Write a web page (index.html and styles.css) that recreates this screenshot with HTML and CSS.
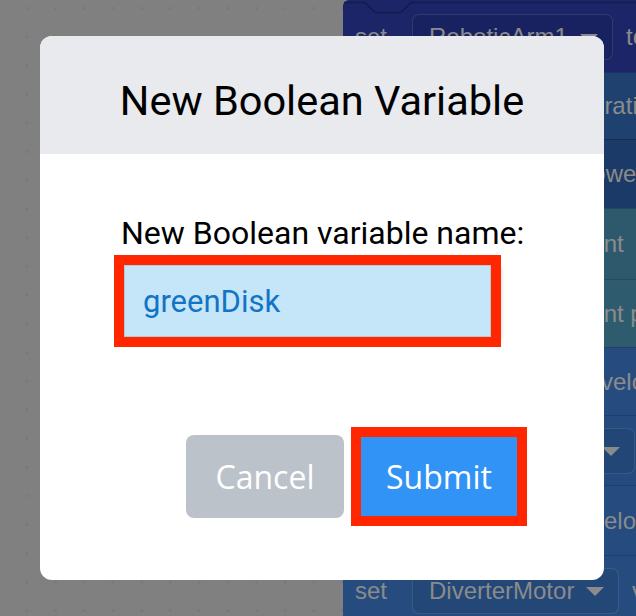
FILE: index.html
```html
<!DOCTYPE html>
<html lang="en">
<head>
  <meta charset="UTF-8">
  <title>New Boolean Variable</title>
  <link rel="stylesheet" href="styles.css">
</head>
<body>

<div class="workspace">
  <div class="stack">
    <div class="row r1">
      <svg class="notch" width="300" height="16" viewBox="0 0 300 16">
        <path d="M0 2.5 H20 C27 2.5 27 12.5 34 12.5 H56 C63 12.5 63 2.5 70 2.5 H300" fill="none" stroke="#131b4f" stroke-width="1.5"/>
      </svg>
      <span class="lbl">set</span>
      <span class="drop">RoboticArm1 <i class="caret"></i></span>
      <span class="lbl">to</span>
    </div>
    <div class="row r2"><span class="lbl">acceleration</span></div>
    <div class="row r3"><span class="lbl">power</span></div>
    <div class="row r4"><span class="lbl">current</span><span class="field"></span></div>
    <div class="row r5"><span class="lbl">current position</span></div>
    <div class="row r6"><span class="lbl">velocity</span></div>
    <div class="row r7"><span class="drop">motor <i class="caret"></i></span></div>
    <div class="row r8"><span class="lbl">velocity</span></div>
    <div class="row r9">
      <span class="lbl">set</span>
      <span class="drop">DiverterMotor <i class="caret"></i></span>
      <span class="lbl">velocity</span>
    </div>
  </div>

  <div class="dialog">
    <div class="dialog-head">New Boolean Variable</div>
    <div class="dialog-body">
      <label class="prompt" for="varName">New Boolean variable name:</label>
      <input type="text" id="varName" class="name-input" value="greenDisk">
      <div class="actions">
        <button class="btn btn-cancel">Cancel</button>
        <button class="btn btn-submit">Submit</button>
      </div>
    </div>
  </div>
</div>

</body>
</html>
```

FILE: styles.css
```css
body {
  margin: 0;
  padding: 0;
  font-family: Roboto, "Noto Sans", sans-serif;
}
.workspace {
  position: relative;
  width: 636px;
  height: 616px;
  overflow: hidden;
  background-color: #808080;
  background-image: radial-gradient(circle, #787878 1px, transparent 1.6px);
  background-size: 28.7px 28.7px;
  background-position: 12.6px 22.6px;
}

/* dimmed blockly stack behind the modal */
.stack {
  margin-left: 343px;
  width: 300px;
  border-top-left-radius: 6px;
  overflow: hidden;
  font-family: "Liberation Sans", Arial, sans-serif;
  font-size: 24px;
  color: #8b8b8b;
}
.row {
  position: relative;
  display: flex;
  align-items: center;
  gap: 13px;
  box-sizing: border-box;
  border-top: 1px solid rgba(0, 0, 0, 0.18);
  white-space: nowrap;
}
.row > * {
  flex-shrink: 0;
}
.notch {
  position: absolute;
  left: 0;
  top: 0;
}
.r1 { height: 72px; padding-left: 12px; padding-top: 2px; background: #1b2567; border-top: none; }
.r2 { height: 67px; padding-left: 192px; background: #1f416f; }
.r3 { height: 69px; padding-left: 236px; background: #1c3a68; }
.r4 { height: 71px; padding-left: 206px; background: #2e596d; }
.r5 { height: 68px; padding-left: 206px; background: #2f5b6e; }
.r6 { height: 68px; padding-left: 258px; background: #264c7f; }
.r7 { height: 70px; padding-left: 172px; background: #254b7e; }
.r8 { height: 70px; padding-left: 249px; background: #264c7f; }
.r9 { height: 72px; padding-left: 12px; background: #264c7f; padding-bottom: 2px; }

.drop {
  display: flex;
  align-items: center;
  justify-content: space-between;
  height: 46px;
  box-sizing: border-box;
  padding: 0 14px 0 16px;
  border: 1.5px solid rgba(255, 255, 255, 0.1);
  border-radius: 7px;
  background: rgba(0, 0, 0, 0.06);
}
.r1 .drop { width: 201px; margin-left: 12px; }
.r7 .drop { width: 120px; }
.r9 .drop { width: 207px; margin-left: 12px; }
.caret {
  width: 0;
  height: 0;
  border-left: 9px solid transparent;
  border-right: 9px solid transparent;
  border-top: 9px solid #8b8b8b;
  margin-top: 2px;
}
.field {
  width: 80px;
  height: 46px;
  margin-left: 6px;
  border: 1.5px solid rgba(255, 255, 255, 0.1);
  border-radius: 7px;
}

/* modal */
.dialog {
  position: absolute;
  left: 40px;
  top: 36px;
  width: 564px;
  height: 544px;
  background: #ffffff;
  border-radius: 12px;
  overflow: hidden;
}
.dialog-head {
  height: 118px;
  box-sizing: border-box;
  padding-top: 10px;
  display: flex;
  align-items: center;
  justify-content: center;
  background: #e9eaee;
  font-size: 41.5px;
  color: #000;
}
.dialog-body {
  display: flex;
  flex-direction: column;
  align-items: flex-start;
  padding: 60px 0 0 81px;
}
.prompt {
  font-size: 32px;
  line-height: 38px;
  color: #000;
}
.name-input {
  margin: 13px 0 0 3px;
  width: 367px;
  height: 72px;
  box-sizing: border-box;
  padding: 0 0 0 18px;
  border: 1px solid #b7c8d6;
  background: #c5e5f9;
  outline: 10px solid #ff2600;
  box-shadow: 12px 2px 3px rgba(0, 0, 0, 0.08);
  font-family: Roboto, sans-serif;
  font-size: 31px;
  color: #1274c4;
}
.actions {
  align-self: stretch;
  display: flex;
  justify-content: flex-end;
  align-items: center;
  gap: 17px;
  margin-top: 98px;
  padding-right: 87px;
}
.btn {
  border: none;
  color: #fff;
  font-family: "Open Sans", sans-serif;
  font-size: 32px;
  padding: 0;
  cursor: pointer;
}
.btn-cancel {
  width: 158px;
  height: 83px;
  background: #bcc2ca;
  border-radius: 8px;
}
.btn-submit {
  width: 156px;
  height: 79px;
  background: #3193f5;
  outline: 10px solid #ff2600;
}
```
